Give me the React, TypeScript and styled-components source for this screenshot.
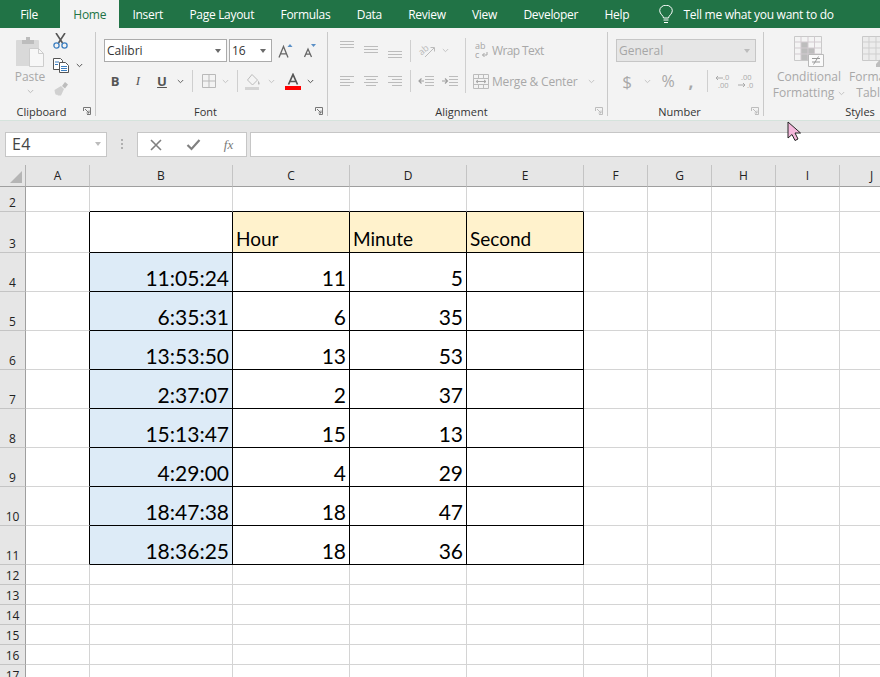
import React from 'react';
import styled, { createGlobalStyle } from 'styled-components';

const GlobalStyle = createGlobalStyle`
    html, body {
        margin: 0;
        padding: 0;
        background: #fff;
    }
    body {
        font-family: "Open Sans", "Noto Sans", sans-serif;
    }
`

const Page = styled.div`
    width: 880px;
    height: 677px;
    overflow: hidden;
    position: relative;
`

/* tabs */
const TabBar = styled.div`
    height: 28px;
    background: #217346;
    display: flex;
    align-items: stretch;
    padding-left: 7px;
`

const Tab = styled.div<{ $active?: boolean; $gap?: number }>`
    display: flex;
    align-items: center;
    padding: 0 13.2px;
    margin-right: ${p => p.$gap ?? 0}px;
    font-size: 12px;
    letter-spacing: -0.3px;
    color: ${p => p.$active ? '#217346' : '#fff'};
    background: ${p => p.$active ? '#f3f3f3' : 'transparent'};
    white-space: nowrap;
`

const TellMe = styled.div`
    display: flex;
    align-items: center;
    gap: 10px;
    margin-left: 17px;
    font-size: 12px;
    letter-spacing: -0.28px;
    color: #fff;
    white-space: nowrap;
`

/* ribbon */
const Ribbon = styled.div`
    height: 93px;
    box-sizing: border-box;
    background: #f3f3f3;
    border-bottom: 1px solid #d5e3dc;
    display: flex;
`

const Group = styled.div<{ $w: number; $last?: boolean }>`
    width: ${p => p.$w}px;
    flex: none;
    box-sizing: border-box;
    display: flex;
    flex-direction: column;
    margin: 4px 0 4px;
    border-right: ${p => p.$last ? 'none' : '1px solid #c9c9c9'};
`

const GroupBody = styled.div`
    flex: 1;
    min-height: 0;
    display: flex;
`

const GroupFooter = styled.div`
    height: 14px;
    margin-bottom: -2px;
    display: flex;
    align-items: center;
    font-size: 11px;
    color: #333;
`

const GroupLabel = styled.span`
    flex: 1;
    text-align: center;
`

const Launcher = styled.svg`
    flex: none;
    width: 8px;
    height: 8px;
    margin-right: 4px;
`

const Stack = styled.div<{ $pad?: number; $w?: number }>`
    display: flex;
    flex-direction: column;
    flex: none;
    box-sizing: border-box;
    width: ${p => p.$w ? `${p.$w}px` : 'auto'};
    padding-left: ${p => p.$pad ?? 0}px;
`

const ToolRow = styled.div<{ $h?: number; $top?: number }>`
    display: flex;
    align-items: center;
    height: ${p => p.$h ?? 24}px;
    margin-top: ${p => p.$top ?? 0}px;
`

const Slot = styled.div<{ $w: number; $left?: number }>`
    width: ${p => p.$w}px;
    margin-left: ${p => p.$left ?? 0}px;
    flex: none;
    height: 100%;
    display: flex;
    align-items: center;
    justify-content: center;
`

const Divider = styled.div<{ $left: number; $right: number }>`
    width: 1px;
    height: 22px;
    flex: none;
    background: #cfcfcf;
    margin: 0 ${p => p.$right}px 0 ${p => p.$left}px;
`

const TallDivider = styled.div`
    width: 1px;
    height: 55px;
    margin-top: 6px;
    flex: none;
    background: #cfcfcf;
`

const Combo = styled.div<{ $w: number; $left?: number; $disabled?: boolean }>`
    width: ${p => p.$w}px;
    height: 23px;
    margin-left: ${p => p.$left ?? 0}px;
    box-sizing: border-box;
    flex: none;
    display: flex;
    align-items: center;
    justify-content: space-between;
    padding: 0 5px 0 2px;
    font-size: 12px;
    background: ${p => p.$disabled ? '#e6e6e6' : '#fff'};
    border: 1px solid ${p => p.$disabled ? '#c6c6c6' : '#ababab'};
    color: ${p => p.$disabled ? '#a6a6a6' : '#333'};
`

const ComboArrow = styled.span<{ $dim?: boolean }>`
    width: 0;
    height: 0;
    border-left: 3.5px solid transparent;
    border-right: 3.5px solid transparent;
    border-top: 4px solid ${p => p.$dim ? '#bcbcbc' : '#6a6a6a'};
`

const FaintLabel = styled.span`
    font-size: 12px;
    letter-spacing: -0.2px;
    color: #a8a8a8;
    white-space: nowrap;
`

const ToolText = styled(FaintLabel)<{ $left: number; $spacing?: number }>`
    margin-left: ${p => p.$left}px;
    letter-spacing: ${p => p.$spacing ?? -0.2}px;
`

const Symbol = styled.span<{ $size: number; $bold?: boolean }>`
    font-size: ${p => p.$size}px;
    font-weight: ${p => p.$bold ? 700 : 400};
    color: #a8a8a8;
`

const BoldGlyph = styled.span`
    font-size: 13px;
    font-weight: 700;
    color: #555;
`

const ItalicGlyph = styled(BoldGlyph)`
    font-family: "Liberation Serif", serif;
    font-style: italic;
    font-weight: 400;
`

const UnderGlyph = styled(BoldGlyph)`
    text-decoration: underline;
`

const PasteColumn = styled.div`
    width: 44px;
    margin-left: 8px;
    display: flex;
    flex-direction: column;
    align-items: center;
    padding-top: 4px;
`

const PasteLabel = styled(FaintLabel)`
    margin: 1px 0 4px;
    line-height: 16px;
    letter-spacing: 0;
`

const LargeTool = styled.div<{ $w: number }>`
    width: ${p => p.$w}px;
    flex: none;
    display: flex;
    flex-direction: column;
    align-items: center;
    padding-top: 4px;
    white-space: nowrap;
`

const LargeLabel = styled(FaintLabel)`
    line-height: 16px;
    letter-spacing: 0;
    display: flex;
    align-items: center;
    gap: 4px;
`

const LargeIconBox = styled.div`
    height: 33px;
`

const ShiftedIcon = styled.div<{ $dy: number }>`
    display: flex;
    transform: translateY(${p => p.$dy}px);
`

/* formula bar */
const FormulaBar = styled.div`
    height: 44px;
    box-sizing: border-box;
    background: #e6e6e6;
    display: flex;
    align-items: center;
    padding: 11px 0 8px 5px;
`

const NameBox = styled.div`
    width: 102px;
    height: 25px;
    box-sizing: border-box;
    background: #fff;
    border: 1px solid #c6c6c6;
    display: flex;
    align-items: center;
    justify-content: space-between;
    padding: 0 5px 2px 6px;
    font-size: 16px;
    letter-spacing: 0.4px;
    color: #444;
`

const Grip = styled.div`
    width: 2px;
    height: 11px;
    margin: 0 14px;
    background: repeating-linear-gradient(to bottom, #b0b0b0 0 2px, transparent 2px 4px);
`

const FxBox = styled.div`
    width: 110px;
    height: 25px;
    box-sizing: border-box;
    background: #fff;
    border: 1px solid #c6c6c6;
    display: flex;
    align-items: center;
`

const FxLabel = styled.span`
    font-family: "Liberation Serif", serif;
    font-style: italic;
    font-size: 13px;
    color: #777;
`

const FormulaInput = styled.div`
    flex: 1;
    height: 25px;
    box-sizing: border-box;
    margin-left: 3px;
    background: #fff;
    border: 1px solid #c6c6c6;
    border-right: none;
`

/* sheet */
const Sheet = styled.div`
    display: grid;
    grid-template-columns: 26px 64px 143px 117px 117px 117px 64px 64px 64px 64px 64px;
    grid-auto-rows: min-content;
`

const Corner = styled.div`
    height: 22px;
    box-sizing: border-box;
    background: #e6e6e6;
    border-right: 1px solid #b1b1b1;
    border-bottom: 1px solid #9f9f9f;
    display: flex;
    align-items: flex-end;
    justify-content: flex-end;
    padding: 0 3px 3px 0;
`

const ColHead = styled.div`
    height: 22px;
    box-sizing: border-box;
    background: #e6e6e6;
    border-bottom: 1px solid #9f9f9f;
    border-right: 1px solid #c4c4c4;
    display: flex;
    align-items: center;
    justify-content: center;
    font-size: 12px;
    color: #222;
`

const RowHead = styled.div<{ $h: number }>`
    height: ${p => p.$h}px;
    box-sizing: border-box;
    background: #e6e6e6;
    border-right: 1px solid #9f9f9f;
    border-bottom: 1px solid #c4c4c4;
    display: flex;
    align-items: flex-end;
    justify-content: center;
    font-size: 12px;
    line-height: 17px;
    color: #222;
`

const Cell = styled.div<{ $h: number; $right?: boolean; $bottom?: boolean; $bg?: string; $num?: boolean }>`
    height: ${p => p.$h}px;
    box-sizing: border-box;
    background: ${p => p.$bg ?? '#fff'};
    border-right: 1px solid ${p => p.$right ? '#000' : '#d4d4d4'};
    border-bottom: 1px solid ${p => p.$bottom ? '#000' : '#d4d4d4'};
    display: flex;
    align-items: flex-end;
    justify-content: ${p => p.$num ? 'flex-end' : 'flex-start'};
    padding: 0 3px 1px;
    font-family: Lato, "Liberation Sans", sans-serif;
    font-size: ${p => p.$num ? 21 : 19}px;
    line-height: 25px;
    color: #000;
`

const CursorArrow = styled.svg`
    position: absolute;
    left: 787px;
    top: 121px;
    width: 15px;
    height: 21px;
`

const Caret = ({ color = '#8a8a8a' }: { color?: string }) => (
    <svg width="7" height="5" viewBox="0 0 7 5"><path d="M.8 1l2.700 2.700L6.200 1" fill="none" stroke={color} strokeWidth="1" /></svg>
);

const LauncherIcon = ({ dim }: { dim?: boolean }) => (
    <Launcher viewBox="0 0 8 8">
        <path d="M.5 4V.5h7v7H4M2 2l4 4M6 3.500V6H3.500" fill="none" stroke={dim ? '#bdbdbd' : '#777'} strokeWidth="1" />
    </Launcher>
);

const PasteIcon = () => (
    <svg width="30" height="32" viewBox="0 0 30 32">
        <path d="M1 5q0-1 1-1h21q1 0 1 1v25H1z" fill="#d9d9d9" />
        <path d="M7 4h4V1h4v3h4v4H7z" fill="#bdbdbd" />
        <path d="M14.500 12.500h9l5 5v13h-14z" fill="#f7f7f7" stroke="#cdcdcd" />
        <path d="M23.500 12.500v5h5" fill="none" stroke="#cdcdcd" />
    </svg>
);

const ScissorsIcon = () => (
    <svg width="15" height="16" viewBox="0 0 15 16">
        <path d="M3 0l6.500 10M12 0L5.500 10" stroke="#555" strokeWidth="1.600" fill="none" />
        <circle cx="3.500" cy="12.500" r="2.600" fill="none" stroke="#3d7fc0" strokeWidth="1.300" />
        <circle cx="11.500" cy="12.500" r="2.600" fill="none" stroke="#3d7fc0" strokeWidth="1.300" />
    </svg>
);

const CopyIcon = () => (
    <svg width="16" height="15" viewBox="0 0 16 15">
        <path d="M.5.5h7l2 2v9h-9z" fill="#fff" stroke="#555" />
        <path d="M6.500 4.500h6l3 3v7h-9z" fill="#fff" stroke="#555" />
        <path d="M2 4h4M2 6.500h3M8 8.500h6M8 10.500h6M8 12.500h6" stroke="#3d7fc0" />
    </svg>
);

const BrushIcon = () => (
    <svg width="16" height="15" viewBox="0 0 16 15">
        <path d="M9 5l3-4 3 2.500-3 4z" fill="#bdbdbd" />
        <path d="M1.500 9L8 5l3 3-3 6.500H5l-1-1-1 .5-1-2z" fill="#d0d0d0" />
    </svg>
);

const FontGrow = ({ small }: { small?: boolean }) => (
    <svg width="15" height="16" viewBox="0 0 15 16">
        <path d={small ? 'M2.500 14L6 6l3.500 8M3.800 11.200h4.400' : 'M1 14.500L5.500 3.500l4.500 11M2.800 10.800h5.400'} fill="none" stroke="#666" strokeWidth="1.300" />
        <path d={small ? 'M9 1h5l-2.500 3z' : 'M9.500 4l2.500-3 2.500 3z'} fill="#5a8fc6" />
    </svg>
);

const BorderIcon = () => (
    <svg width="14" height="14" viewBox="0 0 14 14">
        <path d="M.5.5h13v13H.5zM7 .5v13M.5 7h13" fill="none" stroke="#b9b9b9" />
    </svg>
);

const FillIcon = () => (
    <svg width="17" height="17" viewBox="0 0 17 17">
        <path d="M7 1.500l5.500 5.500L7.500 12 2.500 7z" fill="#f4f4f4" stroke="#bbb" />
        <path d="M13 7.500c1.500 2 2 3 1.500 3.800-.8.700-1.800 0-1.500-1z" fill="#bbb" />
        <path d="M0 14h14v3H0z" fill="#d4d4d4" />
    </svg>
);

const ColorA = () => (
    <svg width="16" height="17" viewBox="0 0 16 17">
        <path d="M3.500 11.500L8 1.500l4.500 10M5 8.500h6" fill="none" stroke="#555" strokeWidth="1.700" />
        <path d="M0 13h16v4H0z" fill="#f00" />
    </svg>
);

const Lines = ({ rows, w = 14, gap = 3, align = 'left' }: { rows: number[]; w?: number; gap?: number; align?: 'left' | 'center' | 'right' }) => (
    <svg width={w} height={(rows.length - 1) * gap + 1} viewBox={`0 0 ${w} ${(rows.length - 1) * gap + 1}`}>
        {rows.map((r, i) => {
            const x = align === 'left' ? 0 : align === 'right' ? w - r : (w - r) / 2;
            return <rect key={i} x={x} y={i * gap} width={r} height="1" fill="#bcbcbc" />;
        })}
    </svg>
);

const OrientIcon = () => (
    <svg width="18" height="16" viewBox="0 0 18 16">
        <text x="1" y="10" fontSize="9" fill="#bbb" fontFamily="Open Sans" transform="rotate(-40 6 8)">ab</text>
        <path d="M7 14L16 5M12.500 4.500H16.500V8.500" fill="none" stroke="#bbb" />
    </svg>
);

const IndentIcon = ({ right }: { right?: boolean }) => (
    <svg width="16" height="11" viewBox="0 0 16 11">
        <path d="M7 .5h9M7 3.500h9M7 6.500h9M7 9.500h9" stroke="#bcbcbc" />
        <path d={right ? 'M0 5h5M3 2.500L5.500 5 3 7.500' : 'M6 5H1M3.500 2.500L1 5l2.500 2.500'} fill="none" stroke="#a0a0a0" strokeWidth="1.200" />
    </svg>
);

const WrapIcon = () => (
    <svg width="14" height="17" viewBox="0 0 14 17">
        <text x="0" y="7" fontSize="9" fill="#a6a6a6" fontFamily="Open Sans">ab</text>
        <text x="0" y="16" fontSize="9" fill="#a6a6a6" fontFamily="Open Sans">c</text>
        <path d="M12 10v3H7.500M9.500 11L7.500 13l2 2" fill="none" stroke="#a6a6a6" />
    </svg>
);

const MergeIcon = () => (
    <svg width="16" height="15" viewBox="0 0 16 15">
        <path d="M.5.5h15v14H.5zM.5 4.500h15M.5 10.500h15M5.500.5v4M10.500.5v4M5.500 10.500v4M10.500 10.500v4" fill="none" stroke="#bcbcbc" />
        <path d="M3 7.500h10M5 6L3 7.500 5 9M11 6l2 1.500L11 9" fill="none" stroke="#a8a8a8" />
    </svg>
);

const DecIcon = ({ more }: { more?: boolean }) => (
    <svg width="17" height="15" viewBox="0 0 17 15">
        {more ? (
            <>
                <text x="3" y="6" fontSize="7.500" fill="#aaa" fontFamily="Open Sans">.00</text>
                <text x="9" y="14" fontSize="7.500" fill="#aaa" fontFamily="Open Sans">.0</text>
                <path d="M0 11h7M5 9l2 2-2 2" fill="none" stroke="#aaa" />
            </>
        ) : (
            <>
                <text x="8" y="6" fontSize="7.500" fill="#aaa" fontFamily="Open Sans">.0</text>
                <text x="3" y="14" fontSize="7.500" fill="#aaa" fontFamily="Open Sans">.00</text>
                <path d="M8 4H1M3 2L1 4l2 2" fill="none" stroke="#aaa" />
            </>
        )}
    </svg>
);

const CondIcon = () => (
    <svg width="30" height="31" viewBox="0 0 30 31">
        <path d="M.5.5h27v24H.5z" fill="#f4f4f4" stroke="#c9c9c9" />
        <path d="M7 6h7v6H7zM7 12h13v6H7zM7 18h7v6H7z" fill="#bdbdbd" />
        <path d="M7 .5v24M14 .5v24M20.500 .5v24M.5 6h27M.5 12h27M.5 18h27" stroke="#d2cbd0" fill="none" />
        <path d="M14.500 18.500h15v12h-15z" fill="#fafafa" stroke="#b9b9b9" />
        <path d="M18 22.500h8M18 26h8M24.500 20.500l-5 8" stroke="#999" fill="none" />
    </svg>
);

const TableIcon = () => (
    <svg width="30" height="31" viewBox="0 0 30 31">
        <path d="M.5.5h27v24H.5z" fill="#ececec" stroke="#c9c9c9" />
        <path d="M.5 6h27M.5 12h27M.5 18h27M7 .5v24M14 .5v24M20.500 .5v24" stroke="#cfcfcf" fill="none" />
        <path d="M14 28l8-9 8 5v7H14z" fill="#bdbdbd" />
    </svg>
);

const Bulb = () => (
    <svg width="14" height="19" viewBox="0 0 14 19">
        <path d="M4.500 13c0-2.500-3.800-3.800-3.800-7.300A6.300 5.500 0 0 1 13.300 5.700C13.300 9.200 9.500 10.500 9.500 13z" fill="none" stroke="#fff" />
        <path d="M4.500 15h5M5 17.500h4" stroke="#fff" />
    </svg>
);

const tabs = ['File', 'Home', 'Insert', 'Page Layout', 'Formulas', 'Data', 'Review', 'View', 'Developer', 'Help'];

const columns = ['A', 'B', 'C', 'D', 'E', 'F', 'G', 'H', 'I', 'J'];

const times: [string, number, number][] = [
    ['11:05:24', 11, 5],
    ['6:35:31', 6, 35],
    ['13:53:50', 13, 53],
    ['2:37:07', 2, 37],
    ['15:13:47', 15, 13],
    ['4:29:00', 4, 29],
    ['18:47:38', 18, 47],
    ['18:36:25', 18, 36],
];

const rowHeight = (row: number) => {
    if (row === 2) return 25;
    if (row === 3) return 41;
    if (row <= 11) return 39;
    return 20;
};

const cellValue = (row: number, col: number): string => {
    if (row === 3) return ['', '', '', 'Hour', 'Minute', 'Second'][col] ?? '';
    if (row >= 4 && row <= 11) {
        const t = times[row - 4];
        if (col === 2) return t[0];
        if (col === 3) return String(t[1]);
        if (col === 4) return String(t[2]);
    }
    return '';
};

const renderRow = (row: number) => (
    <React.Fragment key={row}>
        <RowHead $h={rowHeight(row)}>{row}</RowHead>
        {columns.map((_, i) => {
            const col = i + 1;
            const inTable = col >= 2 && col <= 5 && row >= 3 && row <= 11;
            const bg = row === 3 && col >= 3 && col <= 5 ? '#fff2cc'
                : row >= 4 && row <= 11 && col === 2 ? '#ddebf7' : undefined;
            return (
                <Cell
                    key={col}
                    $h={rowHeight(row)}
                    $bg={bg}
                    $num={row > 3}
                    $right={inTable || (col === 1 && row >= 3 && row <= 11)}
                    $bottom={inTable || (row === 2 && col >= 2 && col <= 5)}
                >
                    {cellValue(row, col)}
                </Cell>
            );
        })}
    </React.Fragment>
);

const App: React.FC = () => (
    <Page>
        <GlobalStyle />
        <TabBar>
            {tabs.map(t => <Tab key={t} $active={t === 'Home'} $gap={t === 'File' ? 9 : 0}>{t}</Tab>)}
            <TellMe><Bulb />Tell me what you want to do</TellMe>
        </TabBar>

        <Ribbon>
            <Group $w={96}>
                <GroupBody>
                    <PasteColumn>
                        <PasteIcon />
                        <PasteLabel>Paste</PasteLabel>
                        <Caret color="#bdbdbd" />
                    </PasteColumn>
                    <Stack>
                        <ToolRow $h={18}>
                            <Slot $w={17}><ScissorsIcon /></Slot>
                        </ToolRow>
                        <ToolRow $h={30}>
                            <Slot $w={17}><CopyIcon /></Slot>
                            <Slot $w={7} $left={7}><Caret color="#555" /></Slot>
                        </ToolRow>
                        <ToolRow $h={16}>
                            <Slot $w={17}><BrushIcon /></Slot>
                        </ToolRow>
                    </Stack>
                </GroupBody>
                <GroupFooter><GroupLabel>Clipboard</GroupLabel><LauncherIcon /></GroupFooter>
            </Group>

            <Group $w={232}>
                <GroupBody>
                    <Stack $pad={8}>
                        <ToolRow $top={7} $h={23}>
                            <Combo $w={123}>Calibri<ComboArrow /></Combo>
                            <Combo $w={43} $left={2}>16<ComboArrow /></Combo>
                            <Slot $w={15} $left={6}><FontGrow /></Slot>
                            <Slot $w={15} $left={9}><FontGrow small /></Slot>
                        </ToolRow>
                        <ToolRow $top={7}>
                            <Slot $w={22}><BoldGlyph>B</BoldGlyph></Slot>
                            <Slot $w={24}><ItalicGlyph>I</ItalicGlyph></Slot>
                            <Slot $w={24}><UnderGlyph>U</UnderGlyph></Slot>
                            <Slot $w={12}><Caret color="#666" /></Slot>
                            <Divider $left={6} $right={9} />
                            <Slot $w={14}><BorderIcon /></Slot>
                            <Slot $w={7} $left={6}><Caret color="#c4c4c4" /></Slot>
                            <Divider $left={8} $right={7} />
                            <Slot $w={17}><FillIcon /></Slot>
                            <Slot $w={7} $left={6}><Caret color="#c4c4c4" /></Slot>
                            <Slot $w={16} $left={10}><ColorA /></Slot>
                            <Slot $w={7} $left={6}><Caret color="#555" /></Slot>
                        </ToolRow>
                    </Stack>
                </GroupBody>
                <GroupFooter><GroupLabel>Font</GroupLabel><LauncherIcon /></GroupFooter>
            </Group>

            <Group $w={280}>
                <GroupBody>
                    <Stack $pad={12} $w={137}>
                        <ToolRow $top={7} $h={23}>
                            <Slot $w={14}><ShiftedIcon $dy={-6}><Lines rows={[14, 14, 14]} /></ShiftedIcon></Slot>
                            <Slot $w={14} $left={10}><ShiftedIcon $dy={-1}><Lines rows={[14, 14, 14]} /></ShiftedIcon></Slot>
                            <Slot $w={14} $left={10}><ShiftedIcon $dy={4}><Lines rows={[14, 14, 14]} /></ShiftedIcon></Slot>
                            <Divider $left={8} $right={7} />
                            <Slot $w={18}><OrientIcon /></Slot>
                            <Slot $w={7} $left={6}><Caret color="#c4c4c4" /></Slot>
                        </ToolRow>
                        <ToolRow $top={7}>
                            <Slot $w={14}><Lines rows={[14, 10, 14, 10]} /></Slot>
                            <Slot $w={14} $left={10}><Lines rows={[14, 10, 14, 10]} align="center" /></Slot>
                            <Slot $w={14} $left={10}><Lines rows={[14, 10, 14, 10]} align="right" /></Slot>
                            <Divider $left={8} $right={7} />
                            <Slot $w={16}><IndentIcon /></Slot>
                            <Slot $w={16} $left={8}><IndentIcon right /></Slot>
                        </ToolRow>
                    </Stack>
                    <TallDivider />
                    <Stack $pad={7}>
                        <ToolRow $top={7} $h={23}>
                            <Slot $w={14} $left={2}><WrapIcon /></Slot>
                            <ToolText $left={3} $spacing={-0.6}>Wrap Text</ToolText>
                        </ToolRow>
                        <ToolRow $top={7}>
                            <Slot $w={16}><MergeIcon /></Slot>
                            <ToolText $left={3}>Merge &amp; Center</ToolText>
                            <Slot $w={7} $left={11}><Caret color="#c4c4c4" /></Slot>
                        </ToolRow>
                    </Stack>
                </GroupBody>
                <GroupFooter><GroupLabel>Alignment</GroupLabel><LauncherIcon dim /></GroupFooter>
            </Group>

            <Group $w={156}>
                <GroupBody>
                    <Stack $pad={8}>
                        <ToolRow $top={7} $h={23}>
                            <Combo $w={140} $disabled>General<ComboArrow $dim /></Combo>
                        </ToolRow>
                        <ToolRow $top={7}>
                            <Slot $w={14} $left={4}><Symbol $size={17}>$</Symbol></Slot>
                            <Slot $w={7} $left={10}><Caret color="#c4c4c4" /></Slot>
                            <Slot $w={16} $left={9}><Symbol $size={16}>%</Symbol></Slot>
                            <Slot $w={8} $left={11}><Symbol $size={17} $bold>,</Symbol></Slot>
                            <Divider $left={12} $right={7} />
                            <Slot $w={17}><DecIcon /></Slot>
                            <Slot $w={17} $left={6}><DecIcon more /></Slot>
                        </ToolRow>
                    </Stack>
                </GroupBody>
                <GroupFooter><GroupLabel>Number</GroupLabel><LauncherIcon dim /></GroupFooter>
            </Group>

            <Group $w={192} $last>
                <GroupBody>
                    <LargeTool $w={90}>
                        <LargeIconBox><CondIcon /></LargeIconBox>
                        <LargeLabel>Conditional</LargeLabel>
                        <LargeLabel>Formatting<Caret color="#c4c4c4" /></LargeLabel>
                    </LargeTool>
                    <LargeTool $w={46}>
                        <LargeIconBox><TableIcon /></LargeIconBox>
                        <LargeLabel>Format as</LargeLabel>
                        <LargeLabel>Table<Caret color="#c4c4c4" /></LargeLabel>
                    </LargeTool>
                </GroupBody>
                <GroupFooter><GroupLabel>Styles</GroupLabel></GroupFooter>
            </Group>
        </Ribbon>

        <FormulaBar>
            <NameBox>E4<ComboArrow $dim /></NameBox>
            <Grip />
            <FxBox>
                <Slot $w={12} $left={12}>
                    <svg width="12" height="12" viewBox="0 0 12 12"><path d="M1 1l10 10M11 1L1 11" stroke="#808080" strokeWidth="1.600" /></svg>
                </Slot>
                <Slot $w={15} $left={24}>
                    <svg width="15" height="13" viewBox="0 0 15 13"><path d="M1.500 7l4 4 8-9" fill="none" stroke="#808080" strokeWidth="2.200" /></svg>
                </Slot>
                <Slot $w={13} $left={21}><FxLabel>fx</FxLabel></Slot>
            </FxBox>
            <FormulaInput />
        </FormulaBar>

        <Sheet>
            <Corner>
                <svg width="12" height="12" viewBox="0 0 12 12"><path d="M12 0v12H0z" fill="#b5b5b5" /></svg>
            </Corner>
            {columns.map(c => <ColHead key={c}>{c}</ColHead>)}
            {[2, 3, 4, 5, 6, 7, 8, 9, 10, 11, 12, 13, 14, 15, 16, 17].map(renderRow)}
        </Sheet>

        <CursorArrow viewBox="0 0 15 21">
            <path d="M1 1v16l4-3.500 3 6 3-1.500-3-6h5.500z" fill="#f5b8dc" stroke="#222" strokeWidth="1" />
        </CursorArrow>
    </Page>
);

export default App;
